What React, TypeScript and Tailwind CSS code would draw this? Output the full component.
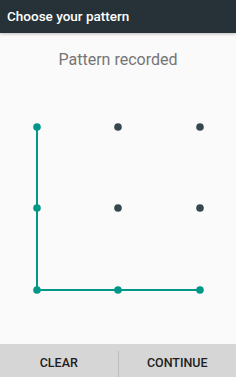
import React from 'react';

const xs = [37, 118, 200];
const ys = [27, 108, 190];
const picked = ['0-0', '0-1', '0-2', '1-2', '2-2'];

export default function App() {
  return (
    <div className="h-screen w-full flex flex-col bg-[#fafafa] font-['Roboto',sans-serif]">
      <header className="h-[33px] shrink-0 bg-[#263238] flex items-center px-[7px] shadow-[0_1px_3px_rgba(0,0,0,0.25)] z-10">
        <span className="text-white text-[13.5px] font-medium">Choose your pattern</span>
      </header>

      <main className="flex-1 flex flex-col">
        <p className="pt-[17px] text-center text-[16px] leading-[20px] text-[#757575]">Pattern recorded</p>
        <svg className="mt-[30px] block" width="236" height="210" viewBox="0 0 236 210">
          <polyline
            points={`${xs[0]},${ys[0]} ${xs[0]},${ys[2]} ${xs[2]},${ys[2]}`}
            fill="none"
            stroke="#009688"
            strokeWidth="2"
          />
          {xs.map((x, i) =>
            ys.map((y, j) => {
              const on = picked.includes(`${i}-${j}`);
              return <circle key={`${i}-${j}`} cx={x} cy={y} r="3.8" fill={on ? '#009688' : '#37474f'} />;
            })
          )}
        </svg>
      </main>

      <footer className="h-[33px] shrink-0 bg-[#d6d6d6] flex items-stretch">
        <button className="flex-1 text-[12.5px] font-medium text-[#212121] pt-[5px]">CLEAR</button>
        <div className="w-px bg-[#bdbdbd] mt-[7px]" />
        <button className="flex-1 text-[12.5px] font-medium text-[#212121] pt-[5px]">CONTINUE</button>
      </footer>
    </div>
  );
}
